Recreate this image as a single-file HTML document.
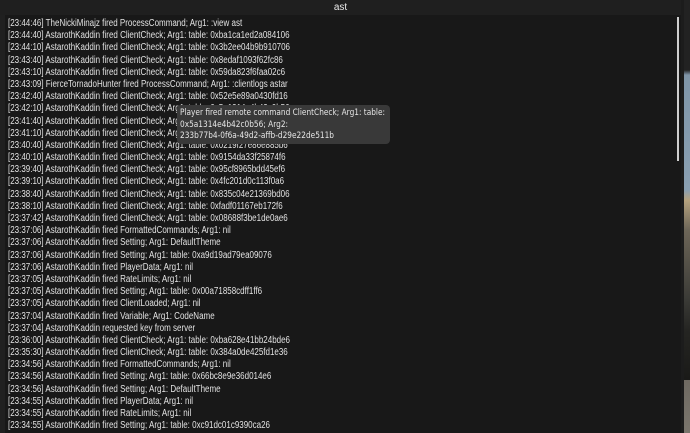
<!DOCTYPE html>
<html><head><style>
html,body{margin:0;padding:0;width:690px;height:433px;overflow:hidden;background:#1b1b1b;}
body{position:relative;font-family:"Liberation Sans",sans-serif;}
#bg{position:absolute;left:681px;top:0;width:9px;height:433px;background:linear-gradient(to bottom,#222 0,#222 70px,#7f95a8 75px,#8aa0b2 190px,#b5a27e 200px,#6d6658 230px,#3a3a36 300px,#252522 330px,#1a1a18 380px,#6f6a62 380px,#7a756c 433px);}
#bg:before{content:"";position:absolute;left:0;top:0;width:3px;height:433px;background:#1c1c1c;}
#win{position:absolute;left:0;top:0;width:681px;height:433px;background:#181818;}
#title{position:absolute;left:0;top:0;width:681px;height:15px;background:#1f1f1f;color:#e8e8e8;font-size:10px;text-align:center;line-height:15px;}
#lb{position:absolute;left:0;top:15px;width:5px;height:418px;background:#202020;}
#sb{position:absolute;left:677px;top:17px;width:2px;height:144px;background:#cfcfcf;}
#log{position:absolute;left:8px;top:18px;color:#e2e2e2;font-size:10px;line-height:12.18px;white-space:pre;transform:scaleX(0.80);transform-origin:0 0;}
#tip{position:absolute;left:177px;top:105px;width:213px;height:39px;background:#393939;border-radius:4px;color:#e6e6e6;font-family:"DejaVu Sans",sans-serif;font-size:8.6px;line-height:11.5px;padding:3px 0 0 3px;box-sizing:border-box;white-space:pre;overflow:hidden;}
#tip span{display:block;transform:scaleX(0.86);transform-origin:0 0;}
</style></head><body>
<div id="bg"></div>
<div id="win">
<div id="title">ast</div>
<div id="lb"></div>
<div id="sb"></div>
<div id="log">[23:44:46] TheNickiMinajz fired ProcessCommand; Arg1: :view ast
[23:44:40] AstarothKaddin fired ClientCheck; Arg1: table: 0xba1ca1ed2a084106
[23:44:10] AstarothKaddin fired ClientCheck; Arg1: table: 0x3b2ee04b9b910706
[23:43:40] AstarothKaddin fired ClientCheck; Arg1: table: 0x8edaf1093f62fc86
[23:43:10] AstarothKaddin fired ClientCheck; Arg1: table: 0x59da823f6faa02c6
[23:43:09] FierceTornadoHunter fired ProcessCommand; Arg1: :clientlogs astar
[23:42:40] AstarothKaddin fired ClientCheck; Arg1: table: 0x52e5e89a0430fd16
[23:42:10] AstarothKaddin fired ClientCheck; Arg1: table: 0x5a1314e4b42c0b56
[23:41:40] AstarothKaddin fired ClientCheck; Arg1: table: 0x1a2b3c4d5e6f7a8b
[23:41:10] AstarothKaddin fired ClientCheck; Arg1: table: 0x2b3c4d5e6f7a8b9c
[23:40:40] AstarothKaddin fired ClientCheck; Arg1: table: 0x0219f27e86e885b6
[23:40:10] AstarothKaddin fired ClientCheck; Arg1: table: 0x9154da33f25874f6
[23:39:40] AstarothKaddin fired ClientCheck; Arg1: table: 0x95cf8965bdd45ef6
[23:39:10] AstarothKaddin fired ClientCheck; Arg1: table: 0x4fc201d0c113f0a6
[23:38:40] AstarothKaddin fired ClientCheck; Arg1: table: 0x835c04e21369bd06
[23:38:10] AstarothKaddin fired ClientCheck; Arg1: table: 0xfadf01167eb172f6
[23:37:42] AstarothKaddin fired ClientCheck; Arg1: table: 0x08688f3be1de0ae6
[23:37:06] AstarothKaddin fired FormattedCommands; Arg1: nil
[23:37:06] AstarothKaddin fired Setting; Arg1: DefaultTheme
[23:37:06] AstarothKaddin fired Setting; Arg1: table: 0xa9d19ad79ea09076
[23:37:06] AstarothKaddin fired PlayerData; Arg1: nil
[23:37:05] AstarothKaddin fired RateLimits; Arg1: nil
[23:37:05] AstarothKaddin fired Setting; Arg1: table: 0x00a71858cdff1ff6
[23:37:05] AstarothKaddin fired ClientLoaded; Arg1: nil
[23:37:04] AstarothKaddin fired Variable; Arg1: CodeName
[23:37:04] AstarothKaddin requested key from server
[23:36:00] AstarothKaddin fired ClientCheck; Arg1: table: 0xba628e41bb24bde6
[23:35:30] AstarothKaddin fired ClientCheck; Arg1: table: 0x384a0de425fd1e36
[23:34:56] AstarothKaddin fired FormattedCommands; Arg1: nil
[23:34:56] AstarothKaddin fired Setting; Arg1: table: 0x66bc8e9e36d014e6
[23:34:56] AstarothKaddin fired Setting; Arg1: DefaultTheme
[23:34:55] AstarothKaddin fired PlayerData; Arg1: nil
[23:34:55] AstarothKaddin fired RateLimits; Arg1: nil
[23:34:55] AstarothKaddin fired Setting; Arg1: table: 0xc91dc01c9390ca26</div>
<div id="tip"><span>Player fired remote command ClientCheck; Arg1: table:</span><span>0x5a1314e4b42c0b56; Arg2:</span><span>233b77b4-0f6a-49d2-affb-d29e22de511b</span></div>
</div>
</body></html>
